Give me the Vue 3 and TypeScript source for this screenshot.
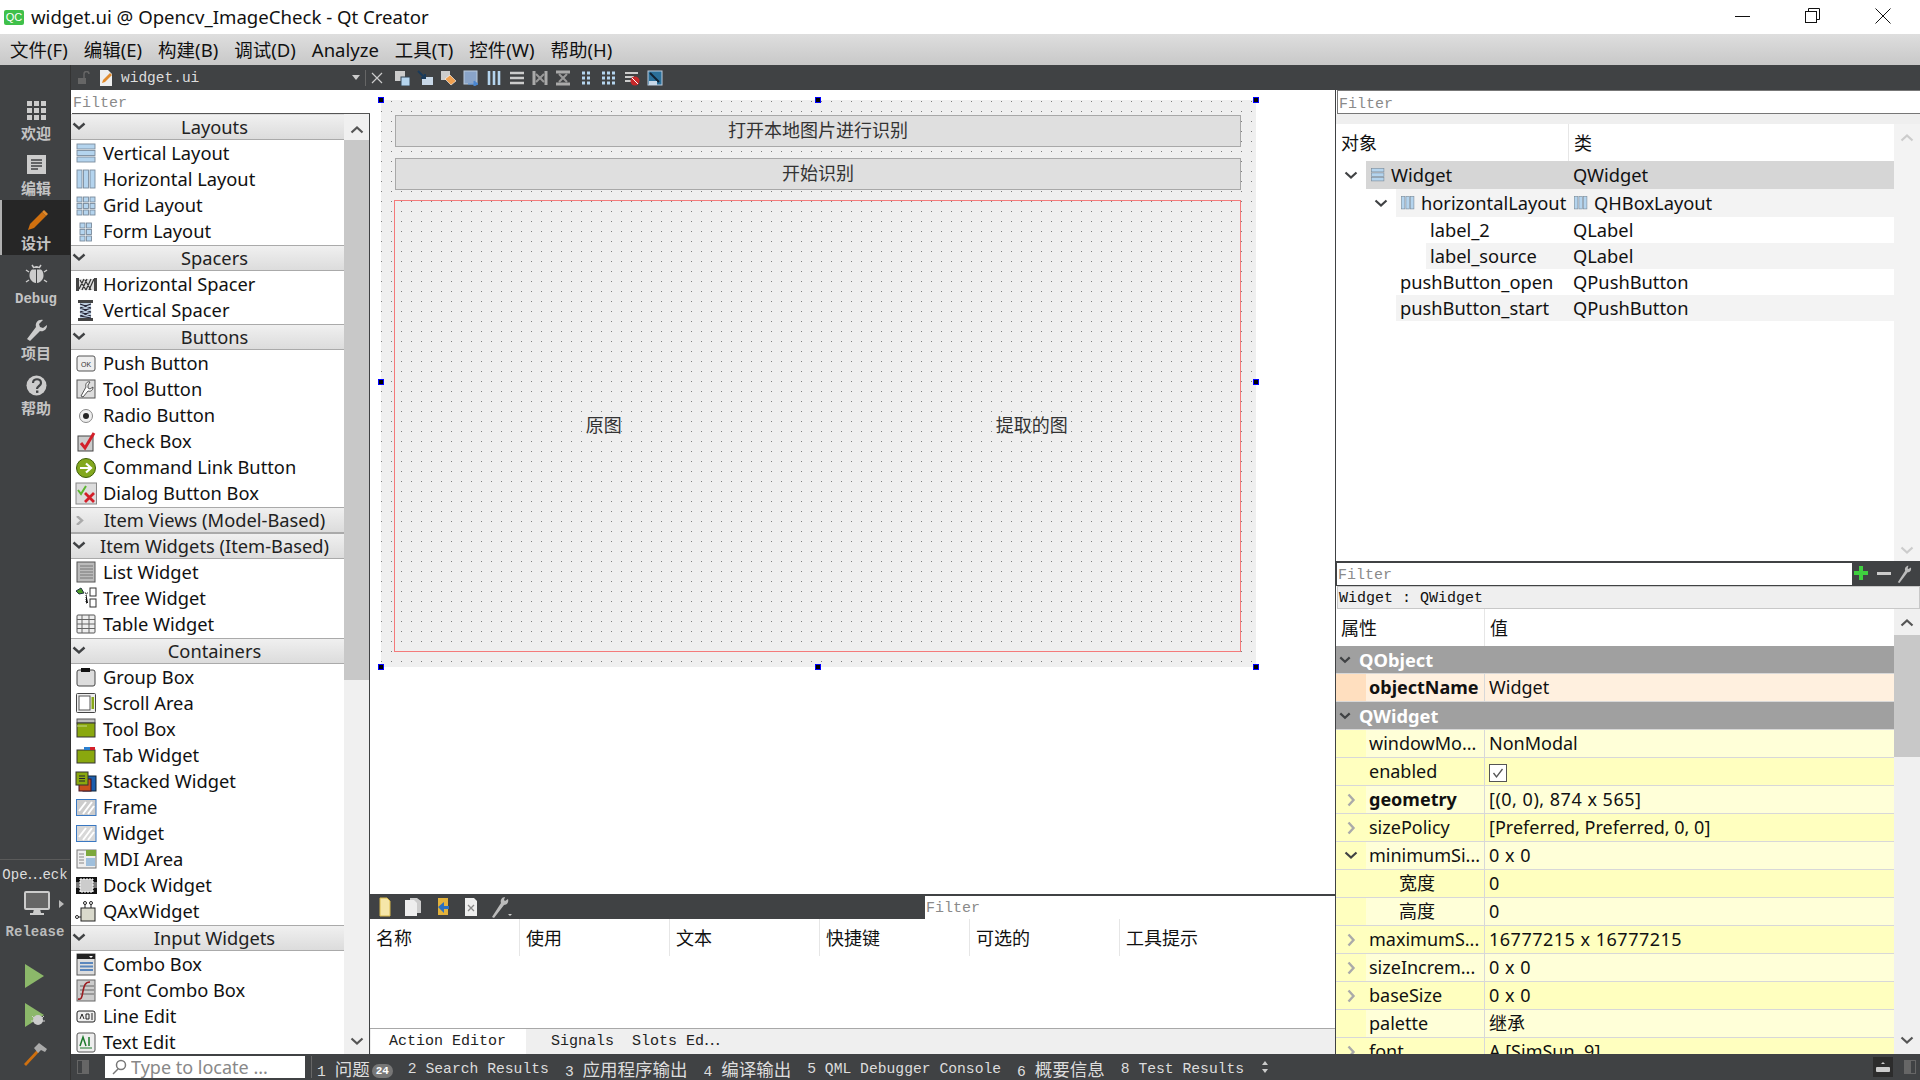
<script setup lang="ts">
type Item = { name: string; icon: string }
type Category = { title: string; open: boolean; items: Item[] }

const menus = ['文件(F)', '编辑(E)', '构建(B)', '调试(D)', 'Analyze', '工具(T)', '控件(W)', '帮助(H)']

const modes = [
  { label: '欢迎', icon: 'grid', active: false, mono: false },
  { label: '编辑', icon: 'edit', active: false, mono: false },
  { label: '设计', icon: 'pencil', active: true, mono: false },
  { label: 'Debug', icon: 'bug', active: false, mono: true },
  { label: '项目', icon: 'wrench', active: false, mono: false },
  { label: '帮助', icon: 'help', active: false, mono: false }
]

const modeIcons: Record<string, string> = {
  grid: '<g fill="#ccc"><rect x="3" y="3" width="5" height="5"/><rect x="10" y="3" width="5" height="5"/><rect x="17" y="3" width="5" height="5"/><rect x="3" y="10" width="5" height="5"/><rect x="10" y="10" width="5" height="5"/><rect x="17" y="10" width="5" height="5"/><rect x="3" y="17" width="5" height="5"/><rect x="10" y="17" width="5" height="5"/><rect x="17" y="17" width="5" height="5"/></g>',
  edit: '<rect x="3" y="2" width="19" height="19" fill="#ccc"/><path d="M7 7h11M7 10h11M7 13h11M7 16h7" stroke="#404244" stroke-width="1.3"/>',
  pencil: '<path d="M4 22l2-6L18 4l4 4L10 20z" fill="#d0700f"/><path d="M18 4l2-2 4 4-2 2z" fill="#e08a2c"/>',
  bug: '<path d="M12.5 4c-2 0-3 1-3.5 2h7c-.5-1-1.500-2-3.5-2zM8 7.500c-1.500 1-2.500 3-2.500 6 0 4 3 7 6.500 7.500V7.500zM13 7.500V21c3.500-.5 6.500-3.500 6.500-7.500 0-3-1-5-2.500-6z" fill="#ccc"/><path d="M8 3l2 3M17 3l-2 3M5 10l-3-2M20 10l3-2M5 18l-3 2M20 18l3 2" stroke="#ccc" stroke-width="1.5"/>',
  wrench: '<path d="M3 21l3 2 10-10c3 1 7-1 7-6l-4 3-3-1-1-3 4-4c-5-1-8 3-7 7z" fill="#ccc"/>',
  help: '<circle cx="12.5" cy="12.5" r="10" fill="#ccc"/><path d="M9 10c0-5 8-5 8 0 0 3-4 3-4 6" fill="none" stroke="#404244" stroke-width="2.2"/><rect x="12" y="17.5" width="2.4" height="2.4" fill="#404244"/>'
}

const box = (x: number, y: number, w: number, h: number) =>
  `<rect x="${x}" y="${y}" width="${w}" height="${h}" fill="#b4d4ee" stroke="#7a8c9c" stroke-width=".9"/>`
const squares = (cols: number, rows: number, x0: number) => {
  let out = ''
  for (let r = 0; r < rows; r++) for (let c = 0; c < cols; c++) out += box(x0 + c * 6.5, 3 + r * 6.5, 5, 5)
  return out
}
const hatch = '<path d="M4 15L11 6M8 18L17 6M13 18l6-8" stroke="#fff" stroke-width="2"/>'

const icons: Record<string, string> = {
  vlayout: box(2, 2, 18, 5) + box(2, 8.5, 18, 5) + box(2, 15, 18, 5),
  hlayout: box(2, 2, 5, 18) + box(8.5, 2, 5, 18) + box(15, 2, 5, 18),
  gridl: squares(3, 3, 2),
  form: squares(2, 3, 5),
  hspacer: '<rect x="1" y="5" width="3" height="13" fill="#444"/><rect x="19" y="5" width="3" height="13" fill="#444"/><rect x="4" y="6" width="15" height="11" fill="#ddd"/><path d="M4 16L9 6M7 17L12 6M11 17L16 6M14 17L19 6M5 7l6 10M10 7l6 10" stroke="#333" stroke-width="1.2"/>',
  vspacer: '<rect x="3" y="1" width="15" height="3" fill="#444"/><rect x="3" y="19" width="15" height="3" fill="#444"/><rect x="5" y="4" width="11" height="15" fill="#bcd"/><path d="M5 5l11 4M16 5L5 9M5 9l11 4M16 9L5 13M5 13l11 4M16 13L5 17M5 17l11 2" stroke="#223" stroke-width="1.2"/>',
  push: '<rect x="2" y="4" width="18" height="15" rx="2" fill="#eee" stroke="#555"/><text x="11" y="14.5" font-size="7" font-family="Liberation Sans" text-anchor="middle" fill="#333">OK</text>',
  tool: '<rect x="2" y="2" width="18" height="18" fill="#ddd" stroke="#555"/><path d="M6 18l2 1 5-6c3 1 5-1 5-4l-3 2-2-1V7l2-3c-3-1-5 2-4 5z" fill="#fff" stroke="#444" stroke-width=".9"/>',
  radio: '<circle cx="11" cy="12" r="6.5" fill="#eee" stroke="#888"/><circle cx="11" cy="12" r="3" fill="#222"/>',
  check: '<rect x="3" y="6" width="15" height="15" fill="#ccc" stroke="#444"/><path d="M6 13l4 5 9-15" fill="none" stroke="#d3202a" stroke-width="3"/>',
  cmd: '<circle cx="11" cy="12" r="9.5" fill="#83a81e" stroke="#3d5e08"/><path d="M5 12h10M11 7.5l5 4.5-5 4.5" fill="none" stroke="#fff" stroke-width="2.2"/>',
  dialog: '<rect x="1" y="1" width="20.5" height="21" fill="#ddd" stroke="#888"/><path d="M3 8l3 4 5-8" fill="none" stroke="#5cb531" stroke-width="2"/><path d="M10 11l9 9M19 11l-9 9" stroke="#d3202a" stroke-width="2.8"/>',
  list: '<rect x="2" y="1" width="18" height="20" fill="#bbb" stroke="#555"/><path d="M5 5h13M5 8h13M5 11h13M5 14h13M5 17h13" stroke="#777"/>',
  tree: '<path d="M1 4l5-3 3 5-5 1z" fill="#4d9a2a" stroke="#234"/><path d="M10 6h3M11 6v10h2" stroke="#333" stroke-dasharray="1 1"/><rect x="15" y="1" width="6" height="8" fill="#fff" stroke="#333"/><rect x="15" y="12" width="6" height="8" fill="#fff" stroke="#333"/>',
  table: '<rect x="2" y="2" width="18" height="18" rx="1" fill="#eee" stroke="#555"/><path d="M2 6.5h18M2 11h18M2 15.5h18M7 2v18M14 2v18" stroke="#666"/>',
  group: '<rect x="2" y="4" width="18" height="16" rx="2" fill="#ddd" stroke="#444"/><rect x="6" y="2" width="9" height="4" fill="#111"/>',
  scroll: '<rect x="1.5" y="1.5" width="19" height="19" rx="1" fill="#eee" stroke="#444"/><rect x="4" y="4" width="11" height="14" fill="#fff" stroke="#555"/><rect x="16.5" y="5" width="2.5" height="12" fill="#88a818"/>',
  toolbox: '<rect x="2" y="1" width="18" height="4" fill="#bbb" stroke="#555"/><rect x="2" y="5" width="18" height="14" fill="#8aa80e" stroke="#333"/><path d="M2 8h10" stroke="#c5d88a"/>',
  tab: '<rect x="2" y="6" width="18" height="13" fill="#8aa80e" stroke="#333"/><rect x="9" y="3" width="6" height="3" fill="#2a7fd0"/><rect x="15" y="3" width="5" height="3" fill="#d3202a"/>',
  stacked: '<rect x="8" y="6" width="13" height="15" fill="#1c5fae" stroke="#123"/><rect x="4" y="9" width="12" height="12" fill="#c8501c" stroke="#412"/><rect x="1" y="2" width="12" height="13" fill="#8aa80e" stroke="#333"/><path d="M4 6h6M4 8.5h6M4 11h6" stroke="#223"/>',
  frame: '<rect x="1.5" y="3.5" width="19.5" height="16" fill="#ccc" stroke="#3a78c2"/>' + hatch,
  widget: '<rect x="1.5" y="3.5" width="19.5" height="16" fill="#d8d8d8" stroke="#3a78c2"/>' + hatch,
  mdi: '<rect x="2" y="2" width="19" height="18" fill="#eee" stroke="#777"/><rect x="11" y="2" width="10" height="6" fill="#7ca83c"/><rect x="11" y="10" width="9" height="8" fill="#9fbfdc"/><path d="M4 6h5M4 9h5M4 12h5M4 15h5" stroke="#888"/>',
  dock: '<rect x="1" y="3" width="21" height="17" fill="#111"/><rect x="1" y="8" width="21" height="6" fill="#777"/><rect x="5" y="5" width="13" height="13" fill="#ccc" stroke="#fff" stroke-dasharray="2 1"/>',
  qax: '<rect x="6" y="8" width="14" height="13" fill="#d9d9cc" stroke="#222"/><path d="M10 8V3M16 8V3M1 17h5" stroke="#222"/><circle cx="10" cy="3" r="1.5" fill="#fff" stroke="#222"/><circle cx="16" cy="3" r="1.5" fill="#fff" stroke="#222"/><circle cx="2" cy="17" r="1.5" fill="#fff" stroke="#222"/>',
  combo: '<rect x="2" y="1" width="18" height="21" fill="#ddd" stroke="#555"/><rect x="2" y="1" width="18" height="5" fill="#222"/><path d="M14 3h4l-2 2z" fill="#fff"/><path d="M5 10h13M5 13.5h13M5 17h13" stroke="#5b87bd" stroke-width="2"/>',
  fontc: '<rect x="2" y="1" width="18" height="21" fill="#ccc" stroke="#666"/><path d="M5 7h14M5 11h14M5 15h14" stroke="#999" stroke-width="2"/><path d="M3 20c4 1 4-3 5-8s2-9 7-9" fill="none" stroke="#9a1c20" stroke-width="1.6"/>',
  line: '<rect x="2" y="6" width="18" height="11" rx="2" fill="#eee" stroke="#222"/><path d="M5 14l2-5 2 5M11 9v5h3v-5zM17 8v7" fill="none" stroke="#222"/>',
  textc: '<rect x="2" y="2" width="18" height="19" rx="2" fill="#eee" stroke="#555"/><path d="M5 15l3-9 3 9M14 6v9" fill="none" stroke="#1c7a2c" stroke-width="1.5"/><path d="M5 17h12" stroke="#1c7a2c"/>'
}

const categories: Category[] = [
  { title: 'Layouts', open: true, items: [
    { name: 'Vertical Layout', icon: 'vlayout' },
    { name: 'Horizontal Layout', icon: 'hlayout' },
    { name: 'Grid Layout', icon: 'gridl' },
    { name: 'Form Layout', icon: 'form' }
  ] },
  { title: 'Spacers', open: true, items: [
    { name: 'Horizontal Spacer', icon: 'hspacer' },
    { name: 'Vertical Spacer', icon: 'vspacer' }
  ] },
  { title: 'Buttons', open: true, items: [
    { name: 'Push Button', icon: 'push' },
    { name: 'Tool Button', icon: 'tool' },
    { name: 'Radio Button', icon: 'radio' },
    { name: 'Check Box', icon: 'check' },
    { name: 'Command Link Button', icon: 'cmd' },
    { name: 'Dialog Button Box', icon: 'dialog' }
  ] },
  { title: 'Item Views (Model-Based)', open: false, items: [] },
  { title: 'Item Widgets (Item-Based)', open: true, items: [
    { name: 'List Widget', icon: 'list' },
    { name: 'Tree Widget', icon: 'tree' },
    { name: 'Table Widget', icon: 'table' }
  ] },
  { title: 'Containers', open: true, items: [
    { name: 'Group Box', icon: 'group' },
    { name: 'Scroll Area', icon: 'scroll' },
    { name: 'Tool Box', icon: 'toolbox' },
    { name: 'Tab Widget', icon: 'tab' },
    { name: 'Stacked Widget', icon: 'stacked' },
    { name: 'Frame', icon: 'frame' },
    { name: 'Widget', icon: 'widget' },
    { name: 'MDI Area', icon: 'mdi' },
    { name: 'Dock Widget', icon: 'dock' },
    { name: 'QAxWidget', icon: 'qax' }
  ] },
  { title: 'Input Widgets', open: true, items: [
    { name: 'Combo Box', icon: 'combo' },
    { name: 'Font Combo Box', icon: 'fontc' },
    { name: 'Line Edit', icon: 'line' },
    { name: 'Text Edit', icon: 'textc' }
  ] }
]

// form editor toolbar, left to right
const formTools = [
  '<rect x="1" y="1" width="10" height="10" fill="#ccc"/><rect x="7" y="7" width="9" height="9" fill="#b4d4ee" stroke="#345"/>',
  '<rect x="5" y="7" width="11" height="8" fill="#c8d8e8"/><path d="M1 1l7 7M4 8h4V4" fill="none" stroke="#1a3a5a" stroke-width="2"/>',
  '<rect x="1" y="1" width="9" height="9" fill="#ccc"/><path d="M5 9l5-4 6 6-5 4z" fill="#f0a050" stroke="#fff" stroke-width=".6"/>',
  '<rect x="1" y="1" width="13" height="13" fill="#8aa4c8" stroke="#bcd"/><path d="M5 14h9M11 11l4 3-4 2z" fill="#4a86d0" stroke="#4a86d0"/>',
  '<path d="M3 1v14M8 1v14M13 1v14" stroke="#b4d4ee" stroke-width="2.6"/>',
  '<path d="M1 3h14M1 8h14M1 13h14" stroke="#ccc" stroke-width="2.6"/>',
  '<path d="M2 1v14M14 1v14" stroke="#aaa" stroke-width="3"/><path d="M4 4l4 4 4-4M4 12l4-4 4 4" fill="none" stroke="#999" stroke-width="2"/>',
  '<path d="M1 2h14M1 14h14" stroke="#aaa" stroke-width="3"/><path d="M4 4l4 4 4-4M4 12l4-4 4 4" fill="none" stroke="#999" stroke-width="2"/>',
  '<path d="M4 3h3M9 3h3M4 8h3M9 8h3M4 13h3M9 13h3" stroke="#b4d4ee" stroke-width="3"/>',
  '<path d="M1 3h3M6 3h3M11 3h3M1 8h3M6 8h3M11 8h3M1 13h3M6 13h3M11 13h3" stroke="#b4d4ee" stroke-width="3"/>',
  '<path d="M1 3h13M1 7h9M1 11h6" stroke="#ccc" stroke-width="2"/><circle cx="11" cy="11" r="4.5" fill="#c8282a"/><path d="M8 8l6 6" stroke="#fff"/>',
  '<rect x="1" y="1" width="14" height="14" fill="#2a6f9a" stroke="#bcd"/><path d="M3 3l9 9" stroke="#123" stroke-width="2"/><path d="M2 11h8v4H2z" fill="#c8d8e8"/>'
]
const handles = ['tl', 'tc', 'tr', 'ml', 'mr', 'bl', 'bc', 'br']
const actionCols = ['名称', '使用', '文本', '快捷键', '可选的', '工具提示']

const treeRows = [
  { name: 'Widget', cls: 'QWidget', level: 1, kind: 'selected', arrow: true, nameIcon: 'vlayout', clsIcon: false },
  { name: 'horizontalLayout', cls: 'QHBoxLayout', level: 2, kind: 'alt', arrow: true, nameIcon: 'hlayout', clsIcon: true },
  { name: 'label_2', cls: 'QLabel', level: 3, kind: '', arrow: false, nameIcon: '', clsIcon: false },
  { name: 'label_source', cls: 'QLabel', level: 3, kind: 'alt', arrow: false, nameIcon: '', clsIcon: false },
  { name: 'pushButton_open', cls: 'QPushButton', level: 2, kind: '', arrow: false, nameIcon: '', clsIcon: false },
  { name: 'pushButton_start', cls: 'QPushButton', level: 2, kind: 'alt', arrow: false, nameIcon: '', clsIcon: false }
]

type Prop = { name: string; value?: string; type: string; arrow?: string; bold?: boolean; check?: boolean; indent?: boolean; digits?: boolean }
const props: Prop[] = [
  { name: 'QObject', type: 'section' },
  { name: 'objectName', value: 'Widget', type: 'orange', bold: true },
  { name: 'QWidget', type: 'section' },
  { name: 'windowMo...', value: 'NonModal', type: 'light' },
  { name: 'enabled', type: 'dark', check: true },
  { name: 'geometry', value: '[(0, 0), 874 x 565]', type: 'light', arrow: 'right', bold: true, digits: true },
  { name: 'sizePolicy', value: '[Preferred, Preferred, 0, 0]', type: 'dark', arrow: 'right' },
  { name: 'minimumSi...', value: '0 x 0', type: 'light', arrow: 'down', digits: true },
  { name: '宽度', value: '0', type: 'dark', indent: true },
  { name: '高度', value: '0', type: 'light', indent: true },
  { name: 'maximumS...', value: '16777215 x 16777215', type: 'dark', arrow: 'right', digits: true },
  { name: 'sizeIncrem...', value: '0 x 0', type: 'light', arrow: 'right', digits: true },
  { name: 'baseSize', value: '0 x 0', type: 'dark', arrow: 'right', digits: true },
  { name: 'palette', value: '继承', type: 'light' },
  { name: 'font', value: 'A  [SimSun, 9]', type: 'dark', arrow: 'right' }
]

const outputs = [
  { n: '2', text: 'Search Results', cjk: false },
  { n: '3', text: '应用程序输出', cjk: true },
  { n: '4', text: '编译输出', cjk: true },
  { n: '5', text: 'QML Debugger Console', cjk: false },
  { n: '6', text: '概要信息', cjk: true },
  { n: '8', text: 'Test Results', cjk: false }
]
</script>

<template>
  <div class="window">
    <header class="titlebar">
      <span class="qc">QC</span>
      <span class="title">widget.ui @ Opencv_ImageCheck - Qt Creator</span>
      <div class="controls">
        <svg width="16" height="16" viewBox="0 0 16 16"><path d="M0 8.5h15" stroke="#111" /></svg>
        <svg width="16" height="16" viewBox="0 0 16 16" fill="none" stroke="#111"><rect x=".5" y="3.5" width="11" height="11" /><path d="M3.500 3.500v-3h11v11h-3" /></svg>
        <svg width="16" height="16" viewBox="0 0 16 16"><path d="M.5.5l15 15M15.500.5l-15 15" stroke="#111" /></svg>
      </div>
    </header>

    <nav class="menubar">
      <span v-for="m in menus" :key="m">{{ m }}</span>
    </nav>

    <div class="body">
      <aside class="modebar">
        <div v-for="m in modes" :key="m.label" class="mode" :class="{ active: m.active }">
          <svg width="25" height="25" viewBox="0 0 25 25" v-html="modeIcons[m.icon]"></svg>
          <span :class="{ mono: m.mono }">{{ m.label }}</span>
        </div>
        <div class="mode-bottom">
          <div class="kit">Ope<span class="dots">⋯</span>eck</div>
          <div class="monitor">
            <svg width="26" height="26" viewBox="0 0 26 26"><rect x="1" y="1" width="24" height="17" rx="1" fill="#666" stroke="#ccc" stroke-width="2" /><path d="M10 18h6l1 4h3v2H6v-2h3z" fill="#ccc" /></svg>
            <svg class="mini" width="5" height="8" viewBox="0 0 5 8"><path d="M0 0l5 4-5 4z" fill="#bbb" /></svg>
          </div>
          <div class="kit bold">Release</div>
          <svg class="run" width="20" height="24" viewBox="0 0 20 24"><path d="M0 0l19 12L0 24z" fill="#8cb86a" /></svg>
          <svg class="run" width="20" height="24" viewBox="0 0 20 24"><path d="M0 0l19 12L0 24z" fill="#8cb86a" /><circle cx="13" cy="17" r="5" fill="#ccc" /><path d="M7 13l2 2M19 13l-2 2M6 18h3M20 18h-3" stroke="#ccc" /></svg>
          <svg class="run" width="24" height="24" viewBox="0 0 24 24"><path d="M1 22l2 2 13-14-2-2z" fill="#d0700f" /><path d="M11 6l5-5 8 6-2 3-4-2-3 3z" fill="#aaa" /></svg>
        </div>
      </aside>

      <div class="main">
        <div class="topbar">
          <div class="doc">
            <svg width="14" height="14" viewBox="0 0 14 14"><rect x="1" y="7" width="8" height="6" fill="#666" /><path d="M7 7V3a2.500 2.500 0 0 1 5 0" fill="none" stroke="#666" stroke-width="1.5" /></svg>
            <svg width="14" height="18" viewBox="0 0 14 18"><path d="M1 1h8l4 4v12H1z" fill="#eee" /><path d="M3 14l1-3 7-7 2 2-7 7z" fill="#e08a2c" /></svg>
            <span class="docname">widget.ui</span>
            <svg class="caret" width="8" height="5" viewBox="0 0 8 5"><path d="M0 0h8L4 5z" fill="#ccc" /></svg>
            <i class="vsep"></i>
            <svg width="12" height="12" viewBox="0 0 12 12"><path d="M1 1l10 10M11 1L1 11" stroke="#ccc" stroke-width="1.2" /></svg>
          </div>
          <div class="formtools">
            <svg v-for="(t, i) in formTools" :key="i" width="16" height="16" viewBox="0 0 16 16" v-html="t"></svg>
          </div>
        </div>

        <div class="workspace">
          <section class="palette">
            <input class="filter" placeholder="Filter" />
            <div class="palette-body">
              <div class="categories">
                <div v-for="c in categories" :key="c.title" class="category" :class="{ closed: !c.open }">
                  <div class="cat-head">
                    <svg class="chev" width="14" height="9" viewBox="0 0 14 9">
                      <path v-if="c.open" d="M1.500 1.500l5.500 5 5.500-5" fill="none" stroke="#404244" stroke-width="2.4" />
                      <path v-else d="M4 0l5 4.500L4 9" fill="none" stroke="#aaa" stroke-width="2.4" />
                    </svg>
                    <span>{{ c.title }}</span>
                  </div>
                  <div v-for="it in c.items" :key="it.name" class="item">
                    <svg width="23" height="23" viewBox="0 0 23 23" v-html="icons[it.icon]"></svg>
                    <span>{{ it.name }}</span>
                  </div>
                </div>
              </div>
              <div class="vscroll">
                <svg width="14" height="9" viewBox="0 0 14 9"><path d="M1.500 7.500l5.500-5 5.500 5" fill="none" stroke="#555" stroke-width="2.2" /></svg>
                <div class="thumb"></div>
                <svg width="14" height="9" viewBox="0 0 14 9"><path d="M1.500 1.500l5.500 5 5.500-5" fill="none" stroke="#555" stroke-width="2.2" /></svg>
              </div>
            </div>
          </section>

          <section class="center">
            <div class="canvas">
              <div class="form">
                <i v-for="h in handles" :key="h" class="handle" :class="h"></i>
                <div class="qbtn">打开本地图片进行识别</div>
                <div class="qbtn">开始识别</div>
                <div class="hlayout">
                  <span class="lbl">原图</span>
                  <span class="lbl">提取的图</span>
                </div>
              </div>
            </div>
            <div class="action-tools">
              <svg width="12" height="20" viewBox="0 0 12 20"><path d="M1 1h7l3 3v15H1z" fill="#f5e6a8" stroke="#d9b94a" /></svg>
              <svg width="18" height="20" viewBox="0 0 18 20"><path d="M6 1h7l4 3v12H6z" fill="#ccc" /><path d="M1 3h9l3 3v13H1z" fill="#eee" /></svg>
              <svg width="16" height="20" viewBox="0 0 16 20"><path d="M3 1h10v17H3z" fill="#e3b23c" /><path d="M3 10l6-5v4h5v3H9v4z" fill="#2a6fc0" /></svg>
              <svg width="14" height="20" viewBox="0 0 14 20"><path d="M1 1h9l3 3v15H1z" fill="#eee" /><path d="M4 8l6 6M10 8l-6 6" stroke="#888" stroke-width="1.3" /></svg>
              <svg width="22" height="22" viewBox="0 0 22 22"><path d="M1 21l2 1 10-13c3 0 5-3 4-6l-3 2-1-1 1-3c-3 0-5 3-4 6z" fill="#bbb" /><path d="M17 18h4l-2 2z" fill="#ccc" /></svg>
              <input class="filter action-filter" placeholder="Filter" />
            </div>
            <div class="action-head">
              <span v-for="c in actionCols" :key="c">{{ c }}</span>
            </div>
            <div class="action-space"></div>
            <div class="tabs">
              <span class="tab on">Action Editor</span>
              <span class="tab">Signals&nbsp;&nbsp;Slots Ed<span class="dots">⋯</span></span>
            </div>
          </section>

          <section class="right">
            <input class="filter right-filter" placeholder="Filter" />
            <div class="tree-area">
              <div class="tree">
                <div class="thead"><span>对象</span><span>类</span></div>
                <div v-for="r in treeRows" :key="r.name" class="trow">
                  <div class="tname" :class="[r.kind, 'lv' + r.level]">
                    <svg v-if="r.arrow" class="tarrow" width="14" height="9" viewBox="0 0 14 9"><path d="M1.500 1.500l5.500 5 5.500-5" fill="none" stroke="#404244" stroke-width="2.2" /></svg>
                    <div class="tcell">
                      <svg v-if="r.nameIcon" width="16" height="16" viewBox="0 0 23 23" v-html="icons[r.nameIcon]"></svg>
                      <span>{{ r.name }}</span>
                    </div>
                  </div>
                  <div class="tcls" :class="r.kind">
                    <svg v-if="r.clsIcon" width="16" height="16" viewBox="0 0 23 23" v-html="icons.hlayout"></svg>
                    <span>{{ r.cls }}</span>
                  </div>
                </div>
              </div>
              <div class="rscroll">
                <svg width="14" height="9" viewBox="0 0 14 9"><path d="M1.500 7.500l5.500-5 5.500 5" fill="none" stroke="#ccc" stroke-width="2.2" /></svg>
                <svg width="14" height="9" viewBox="0 0 14 9"><path d="M1.500 1.500l5.500 5 5.500-5" fill="none" stroke="#ccc" stroke-width="2.2" /></svg>
              </div>
            </div>

            <div class="prop-tools">
              <input class="filter prop-filter" placeholder="Filter" />
              <svg width="18" height="18" viewBox="0 0 18 18"><path d="M6 1h4v5h5v4h-5v5H6v-5H1V6h5z" fill="#3fcf3f" /></svg>
              <svg width="14" height="4" viewBox="0 0 14 4"><rect width="14" height="3" fill="#ccc" /></svg>
              <svg width="18" height="20" viewBox="0 0 22 22"><path d="M1 21l2 1 10-13c3 0 5-3 4-6l-3 2-1-1 1-3c-3 0-5 3-4 6z" fill="#bbb" /></svg>
            </div>
            <div class="prop-class">Widget : QWidget</div>
            <div class="prop-area">
              <div class="prop-table">
                <div class="phead"><span>属性</span><span>值</span></div>
                <template v-for="p in props" :key="p.name">
                  <div v-if="p.type === 'section'" class="section">
                    <svg width="12" height="8" viewBox="0 0 14 9"><path d="M1.500 1.500l5.500 5 5.500-5" fill="none" stroke="#404244" stroke-width="2.6" /></svg>
                    <span>{{ p.name }}</span>
                  </div>
                  <div v-else class="prow" :class="p.type">
                    <div class="pindent">
                      <svg v-if="p.arrow === 'right'" width="9" height="14" viewBox="0 0 9 14"><path d="M1.500 1.500l5 5.500-5 5.500" fill="none" stroke="#aaa" stroke-width="2.4" /></svg>
                      <svg v-if="p.arrow === 'down'" width="14" height="9" viewBox="0 0 14 9"><path d="M1.500 1.500l5.500 5 5.500-5" fill="none" stroke="#404244" stroke-width="2.2" /></svg>
                    </div>
                    <div class="pname" :class="{ bold: p.bold, sub: p.indent }">{{ p.name }}</div>
                    <div class="pval" :class="{ digits: p.digits }">
                      <span v-if="p.check" class="cb">
                        <svg width="12" height="12" viewBox="0 0 12 12"><path d="M1.500 6l3 4 6-8" fill="none" stroke="#555" stroke-width="1.3" /></svg>
                      </span>
                      <template v-else>{{ p.value }}</template>
                    </div>
                  </div>
                </template>
              </div>
              <div class="pscroll">
                <svg width="14" height="9" viewBox="0 0 14 9"><path d="M1.500 7.500l5.500-5 5.500 5" fill="none" stroke="#555" stroke-width="2.2" /></svg>
                <div class="pthumb"></div>
                <svg class="pdown" width="14" height="9" viewBox="0 0 14 9"><path d="M1.500 1.500l5.500 5 5.500-5" fill="none" stroke="#555" stroke-width="2.2" /></svg>
              </div>
            </div>
          </section>
        </div>

        <footer class="statusbar">
          <svg class="toggle" width="12" height="14" viewBox="0 0 12 14"><rect width="12" height="14" fill="#666" /><rect x="1" y="1" width="4" height="12" fill="#404244" /></svg>
          <div class="locate">
            <svg width="17" height="17" viewBox="0 0 17 17"><circle cx="10" cy="6" r="4.5" fill="none" stroke="#777" stroke-width="1.5" /><path d="M7 10l-5 5" stroke="#777" stroke-width="1.5" /></svg>
            <input placeholder="Type to locate ..." />
          </div>
          <i class="sbsep"></i>
          <span class="out first">1 <b>问题</b><em>24</em></span>
          <span v-for="o in outputs" :key="o.n" class="out">{{ o.n }} <b v-if="o.cjk">{{ o.text }}</b><template v-else>{{ o.text }}</template></span>
          <svg class="updown" width="8" height="14" viewBox="0 0 8 14"><path d="M4 1l3 4H1zM4 13l3-4H1z" fill="#ccc" /></svg>
          <div class="sb-right">
            <div class="sb-btn"><svg width="14" height="12" viewBox="0 0 14 12"><rect y="6" width="14" height="5" rx="1" fill="#ccc" /><path d="M7 1l2 2H5z" fill="#ccc" /></svg></div>
            <svg width="12" height="14" viewBox="0 0 12 14"><rect width="12" height="14" fill="#666" /><rect x="7" y="1" width="4" height="12" fill="#404244" /></svg>
          </div>
        </footer>
      </div>
    </div>
  </div>
</template>

<style>
html, body { margin: 0; background: #404244; }
</style>

<style scoped>
.window {
  width: 1920px;
  height: 1080px;
  display: flex;
  flex-direction: column;
  overflow: hidden;
  font-family: "Noto Sans", "Noto Sans CJK SC", sans-serif;
  font-size: 18.3px;
  color: #111;
}
.titlebar {
  height: 34px;
  flex: none;
  display: flex;
  align-items: center;
  background: #fff;
  padding-left: 4px;
}
.qc {
  width: 20px;
  height: 15px;
  background: #3fc04a;
  border-radius: 2px;
  color: #fff;
  font-size: 11px;
  line-height: 15px;
  text-align: center;
  font-family: "Liberation Sans", sans-serif;
}
.title { margin: -2px 0 0 7px; font-size: 18.6px; }
.controls {
  margin-left: auto;
  display: flex;
  gap: 54px;
  padding-right: 29px;
  margin-top: -2px;
}
.menubar {
  height: 31px;
  flex: none;
  display: flex;
  align-items: center;
  padding-left: 2px;
  background: linear-gradient(#dedede, #c8c8c8);
  font-size: 18.5px;
}
.menubar span { padding: 0 8px; line-height: 31px; }
.body { flex: 1; display: flex; min-height: 0; }

.modebar {
  width: 71px;
  flex: none;
  background: #404244;
  display: flex;
  flex-direction: column;
  padding-top: 25px;
  color: #c4c4c4;
  box-sizing: border-box;
  border-right: 1px solid #333;
}
.mode {
  height: 55px;
  box-sizing: border-box;
  padding-top: 5px;
  display: flex;
  flex-direction: column;
  align-items: center;
  justify-content: center;
  font-size: 15px;
  line-height: 20px;
  font-weight: 700;
  border-left: 2px solid transparent;
}
.mode.active { background: #262626; border-left-color: #b0b0b0; }
.mode .mono { font-family: "Liberation Mono", monospace; font-size: 14px; margin-top: 2px; }
.mode-bottom {
  margin-top: auto;
  height: 221px;
  border-top: 1px solid #5a5a5a;
  display: flex;
  flex-direction: column;
  align-items: center;
  box-sizing: border-box;
  padding-top: 5px;
}
.kit {
  font-family: "Liberation Mono", monospace;
  font-size: 14px;
  color: #ddd;
  line-height: 20px;
  white-space: nowrap;
}
.kit.bold { font-weight: 700; color: #bbb; margin-top: 3px; }
.dots { font-family: "Noto Sans CJK SC", sans-serif; line-height: 0; }
.monitor { display: flex; align-items: center; gap: 9px; margin: 4px 0 0 17px; height: 30px; }
.run { margin-top: 22px; }
.run + .run { margin-top: 15px; }

.main { flex: 1; min-width: 0; display: flex; flex-direction: column; }
.topbar {
  height: 25px;
  flex: none;
  background: #404244;
  display: flex;
  align-items: center;
  padding-left: 6px;
  box-sizing: border-box;
}
.doc { display: flex; align-items: center; width: 306px; gap: 8px; }
.docname {
  font-family: "Liberation Mono", monospace;
  font-size: 14.5px;
  color: #ddd;
}
.caret { margin-left: auto; margin-right: -3px; }
.vsep { width: 1px; height: 16px; background: #666; margin-right: -3px; }
.formtools { display: flex; gap: 7px; margin-left: 11px; }

.workspace { flex: 1; min-height: 0; display: flex; }

.filter {
  display: block;
  box-sizing: border-box;
  border: 0;
  outline: 0;
  background: #fff;
  font-family: "Liberation Mono", monospace;
  font-size: 15px;
  padding: 4px 1px 0;
  margin: 0;
}
.filter::placeholder { color: #8a8a8a; opacity: 1; }

.palette {
  width: 298px;
  flex: none;
  display: flex;
  flex-direction: column;
  background: #fff;
  border-right: 1px solid #404244;
}
.palette .filter { height: 24px; width: 100%; border-bottom: 1px solid #555; margin-left: 1px; }
.palette-body { flex: 1; min-height: 0; display: flex; }
.categories { width: 273px; flex: none; overflow: hidden; }
.category { padding-bottom: 1px; }
.category.closed { padding-bottom: 0; }
.cat-head {
  height: 26px;
  box-sizing: border-box;
  border-top: 1px solid #aaa;
  border-bottom: 1px solid #aaa;
  background: linear-gradient(#f0f0f0, #dcdcdc);
  display: flex;
  align-items: center;
  justify-content: center;
  padding: 0 0 2px 14px;
  position: relative;
  color: #222;
}
.category:first-child .cat-head { border-top-color: #ddd; }
.chev { position: absolute; left: 1px; top: 7px; }
.category.closed .chev { left: 2px; top: 8px; }
.item {
  height: 26px;
  display: flex;
  align-items: center;
  padding-left: 4px;
  gap: 5px;
  white-space: nowrap;
}
.item span { line-height: 26px; }
.vscroll {
  flex: 1;
  background: #f0f0f0;
  display: flex;
  flex-direction: column;
  align-items: center;
}
.vscroll svg:first-child { margin-top: 11px; }
.vscroll svg:last-child { margin-top: auto; margin-bottom: 8px; }
.thumb { width: 100%; height: 540px; background: #c8c8c8; margin-top: 6px; }

.center {
  width: 965px;
  flex: none;
  display: flex;
  flex-direction: column;
  background: #fff;
  border-right: 1px solid #404244;
}
.canvas { flex: 1; min-height: 0; padding: 10px 0 0 11px; }
.form {
  position: relative;
  width: 875px;
  height: 567px;
  box-sizing: border-box;
  padding: 15px 15px 15px 14px;
  display: flex;
  flex-direction: column;
  background-color: #efefef;
  background-image: url("data:image/svg+xml,%3Csvg xmlns='http://www.w3.org/2000/svg' width='10' height='10'%3E%3Crect x='0' y='1' width='1' height='1' fill='%23808080'/%3E%3C/svg%3E");
  background-size: 10px 10px;
}
.handle {
  position: absolute;
  width: 4px;
  height: 4px;
  background: #000;
  border: 1px solid #00f;
  margin: -3px 0 0 -3px;
}
.tl { left: 0; top: 0; }
.tc { left: 437px; top: 0; }
.tr { left: 875px; top: 0; }
.ml { left: 0; top: 282px; }
.mr { left: 875px; top: 282px; }
.bl { left: 0; top: 567px; }
.bc { left: 437px; top: 567px; }
.br { left: 875px; top: 567px; }
.qbtn {
  height: 30px;
  box-sizing: content-box;
  border: 1px solid #a8a8a8;
  background: #dfdfdf;
  text-align: center;
  line-height: 27px;
  color: #333;
  font-family: "Noto Sans CJK SC", sans-serif;
  font-size: 18px;
  margin-bottom: 11px;
}
.hlayout {
  height: 452px;
  box-sizing: border-box;
  margin: -1px 0 0 -1px;
  border: 1px solid #f47a7a;
  display: grid;
  grid-template-columns: 1fr 1fr;
  align-items: center;
  justify-items: center;
  padding-bottom: 5px;
  font-family: "Noto Sans CJK SC", sans-serif;
  font-size: 18px;
  color: #333;
}
.lbl { display: block; }
.lbl:first-child { margin-right: 5px; }
.lbl:last-child { margin-left: 6px; }
.action-tools {
  height: 25px;
  flex: none;
  background: #404244;
  display: flex;
  align-items: center;
  gap: 13px;
  padding-left: 9px;
}
.action-filter { margin-left: auto; width: 410px; height: 23px; margin-top: 2px; padding-top: 2px; }
.action-head {
  height: 37px;
  flex: none;
  display: grid;
  grid-template-columns: repeat(6, 150px);
  align-items: stretch;
  font-family: "Noto Sans CJK SC", sans-serif;
  font-size: 18px;
}
.action-head span { padding: 0 0 0 6px; line-height: 37px; border-right: 1px solid #e6e6e6; }
.action-head span:last-child { border-right: 0; }
.action-space { height: 72px; flex: none; }
.tabs {
  height: 26px;
  flex: none;
  display: flex;
  background: #efefef;
  border-top: 1px solid #a8a8a8;
  box-sizing: border-box;
  font-family: "Liberation Mono", monospace;
  font-size: 15px;
  line-height: 26px;
  color: #222;
}
.tab { padding: 0 17px 0 25px; white-space: nowrap; }
.tab.on { background: #fff; padding: 0 18px; margin-left: 1px; width: 155px; box-sizing: border-box; }

.right {
  flex: 1;
  min-width: 0;
  display: flex;
  flex-direction: column;
  background: #fff;
}
.right-filter {
  height: 24px;
  width: 100%;
  border: 1px solid #777;
  margin-left: 1px;
  flex: none;
}
.tree-area {
  height: 447px;
  flex: none;
  display: flex;
  border-top: 10px solid #efefef;
  box-sizing: border-box;
}
.tree { width: 558px; flex: none; }
.thead {
  display: grid;
  grid-template-columns: 233px 1fr;
  height: 37px;
  line-height: 37px;
  font-family: "Noto Sans CJK SC", sans-serif;
  font-size: 18px;
}
.thead span { padding-left: 5px; }
.thead span:first-child { border-right: 1px solid #e6e6e6; }
.trow { display: grid; grid-template-columns: 233px 1fr; height: 26px; line-height: 26px; }
.trow:nth-of-type(2), .trow:nth-of-type(3) { height: 28px; line-height: 28px; }
.tname { position: relative; display: flex; min-width: 0; }
.tcell { flex: 1; display: flex; align-items: center; gap: 5px; white-space: nowrap; overflow: hidden; padding-left: 4px; }
.lv1 { padding-left: 30px; }
.lv2 { padding-left: 60px; }
.lv3 { padding-left: 90px; }
.tarrow { position: absolute; top: 10px; }
.lv1 .tarrow { left: 8px; }
.lv2 .tarrow { left: 38px; }
.selected .tcell, .tcls.selected { background: #d6d6d6; }
.alt .tcell, .tcls.alt { background: #f3f3f3; }
.tcls { display: flex; align-items: center; gap: 5px; padding-left: 4px; }
.rscroll {
  flex: 1;
  background: #f3f3f3;
  display: flex;
  flex-direction: column;
  align-items: center;
  justify-content: space-between;
  padding: 9px 0 6px;
}
.prop-tools {
  height: 25px;
  flex: none;
  background: #404244;
  display: flex;
  align-items: center;
  gap: 6px;
  padding-left: 1px;
}
.prop-filter { width: 515px; height: 22px; margin-right: -5px; }
.prop-class {
  height: 23px;
  flex: none;
  box-sizing: border-box;
  background: #efefef;
  border: 1px solid #c8c8c8;
  font-family: "Liberation Mono", monospace;
  font-size: 15px;
  line-height: 23px;
  padding-left: 1px;
  margin-left: 1px;
  color: #111;
}
.prop-area { flex: 1; min-height: 0; display: flex; overflow: hidden; }
.prop-table { width: 558px; flex: none; }
.phead {
  display: grid;
  grid-template-columns: 149px 1fr;
  height: 37px;
  line-height: 37px;
  font-family: "Noto Sans CJK SC", sans-serif;
  font-size: 18px;
}
.phead span { padding-left: 5px; }
.phead span:first-child { border-right: 1px solid #e6e6e6; }
.section {
  height: 28px;
  box-sizing: border-box;
  background: #a0a0a0;
  border-bottom: 1px solid #d8d8d8;
  color: #fff;
  font-weight: 700;
  display: flex;
  align-items: center;
  padding-left: 3px;
  gap: 8px;
}
.prow {
  height: 28px;
  box-sizing: border-box;
  border-bottom: 1px solid #d8d8d8;
  display: grid;
  grid-template-columns: 30px 119px 1fr;
  line-height: 27px;
  font-size: 18px;
}
.pindent {
  display: flex;
  align-items: center;
  justify-content: center;
  background: #ffffbf;
}
.prow.orange .pindent { background: #ffdfbf; }
.pname { padding-left: 3px; background: #ffffd8; border-right: 1px solid #d8d8d8; white-space: nowrap; overflow: hidden; }
.pname.bold { font-weight: 700; }
.pname.sub { padding-left: 33px; }
.pval { padding-left: 4px; background: #ffffd8; white-space: nowrap; }
.pval.digits { letter-spacing: .5px; }
.prow.dark .pval, .prow.dark .pname { background: #ffffbf; }
.prow.orange .pval, .prow.orange .pname { background: #fff0df; }
.cb {
  display: inline-flex;
  width: 16px;
  height: 16px;
  align-items: center;
  justify-content: center;
  border: 1px solid #555;
  background: #fff;
  vertical-align: -1px;
}
.pscroll {
  flex: 1;
  background: #f0f0f0;
  display: flex;
  flex-direction: column;
  align-items: center;
  padding-top: 9px;
}
.pthumb { width: 100%; height: 122px; background: #c8c8c8; margin-top: 8px; }
.pdown { margin-top: auto; margin-bottom: 9px; }

.statusbar {
  height: 26px;
  flex: none;
  background: #404244;
  display: flex;
  align-items: center;
  font-family: "Liberation Mono", monospace;
  font-size: 14.7px;
  color: #ddd;
  padding-left: 6px;
  white-space: nowrap;
}
.statusbar b { font-weight: 400; font-family: "Noto Sans CJK SC", sans-serif; font-size: 17.5px; }
.toggle { margin-right: 16px; }
.locate {
  width: 200px;
  height: 22px;
  background: #fff;
  display: flex;
  align-items: center;
  gap: 3px;
  padding-left: 6px;
  box-sizing: border-box;
}
.locate input {
  border: 0;
  outline: 0;
  width: 165px;
  padding: 0;
  background: transparent;
  font-family: "Noto Sans", sans-serif;
  font-size: 18px;
}
.locate input::placeholder { color: #888; opacity: 1; }
.sbsep { width: 1px; height: 22px; background: #666; margin: 0 5px 0 6px; }
.out { margin: 3px 16px 0 0; }
.out.first { margin-right: 15px; }
.out em {
  display: inline-block;
  font-style: normal;
  background: #777;
  color: #fff;
  border-radius: 9px;
  font-size: 11px;
  font-weight: 700;
  padding: 0 4px;
  line-height: 14px;
  margin-left: 2px;
  vertical-align: 2px;
}
.updown { margin-left: 1px; }
.sb-right { margin-left: auto; display: flex; align-items: center; gap: 11px; padding-right: 4px; }
.sb-btn { width: 20px; height: 20px; background: #2c2c2c; display: flex; align-items: center; justify-content: center; }
</style>
